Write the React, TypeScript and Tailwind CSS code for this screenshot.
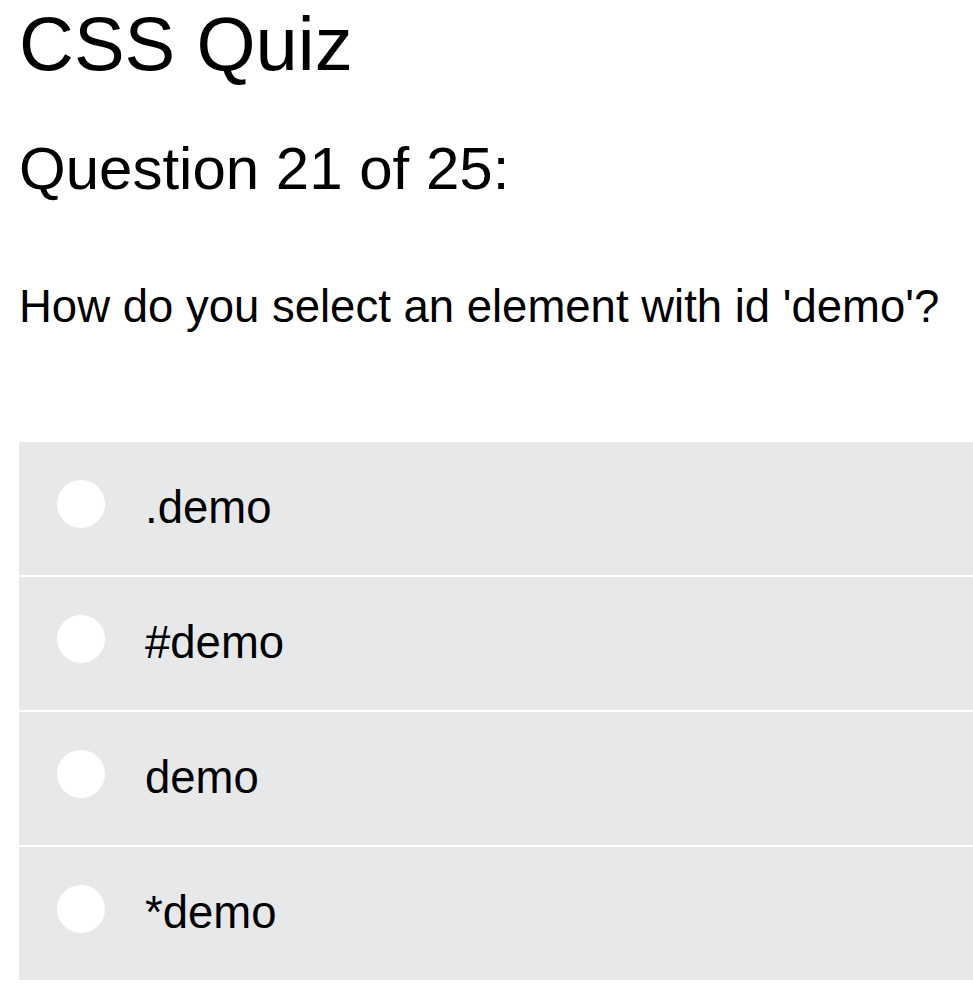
import React from "react";

const options = [".demo", "#demo", "demo", "*demo"];

export default function App() {
  return (
    <div className="min-h-screen bg-white text-black pl-[19px] pt-[6px]" style={{ fontFamily: '"Liberation Sans", Arial, sans-serif' }}>
      <h1 className="text-[76px] leading-[76px] font-normal">CSS Quiz</h1>
      <h2 className="mt-[57px] text-[60px] leading-[60px] font-normal">Question 21 of 25:</h2>
      <p className="mt-[85px] text-[45.5px] leading-[45.5px] whitespace-nowrap">How do you select an element with id 'demo'?</p>
      <div className="mt-[112px] flex flex-col gap-[2px]">
        {options.map((o) => (
          <label key={o} className="flex items-start h-[133px] bg-[#e7e8ea]">
            <span className="mt-[38px] ml-[38px] w-[48px] h-[48px] rounded-full bg-white shrink-0" />
            <span className="ml-[40px] mt-[43px] text-[45.5px] leading-[45.5px]">{o}</span>
          </label>
        ))}
      </div>
    </div>
  );
}
